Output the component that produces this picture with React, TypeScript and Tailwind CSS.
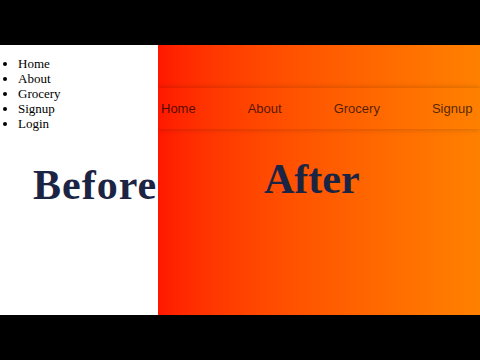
import React from 'react';

const links = ['Home', 'About', 'Grocery', 'Signup', 'Login'];
// the fifth link sits past the right edge in the shot, so the bar shows four
const navLinks = links.slice(0, 4);

const App: React.FC = () => {
  return (
    <div className="w-[480px] h-[360px] bg-black flex flex-col overflow-hidden">
      {/* top letterbox */}
      <div className="h-[45px] shrink-0" />

      <div className="h-[270px] shrink-0 flex">
        {/* BEFORE — plain list */}
        <div className="w-[158px] shrink-0 bg-white flex flex-col">
          <ul
            className="list-disc pl-[18px] pt-[11px] text-[13px] leading-[15px] text-black"
            style={{ fontFamily: '"Liberation Serif", "Times New Roman", serif' }}
          >
            {links.map((l) => (
              <li key={l}>{l}</li>
            ))}
          </ul>
          <h2
            className="mt-[30px] pl-[33px] text-[42px] leading-[48px] font-bold tracking-[1px] text-[#1c2444] whitespace-nowrap"
            style={{ fontFamily: '"Liberation Serif", "Times New Roman", serif' }}
          >
            Before
          </h2>
        </div>

        {/* AFTER — styled nav */}
        <div className="flex-1 bg-gradient-to-r from-[#ff1700] to-[#ff8000] flex flex-col overflow-hidden">
          <nav className="mt-[43px] h-[41px] shrink-0 flex items-center shadow-[0_0_6px_rgba(0,0,0,0.22)]">
            <ul
              className="flex items-center gap-[52px] pl-[3px] text-[13px] text-black/70 whitespace-nowrap"
              style={{ fontFamily: '"Liberation Sans", Arial, sans-serif' }}
            >
              {navLinks.map((l) => (
                <li key={l}>{l}</li>
              ))}
            </ul>
          </nav>
          <h2
            className="mt-[26px] pl-[106px] text-[42px] leading-[48px] font-bold text-[#1c2444] whitespace-nowrap"
            style={{ fontFamily: '"Liberation Serif", "Times New Roman", serif' }}
          >
            After
          </h2>
        </div>
      </div>

      {/* bottom letterbox */}
      <div className="flex-1" />
    </div>
  );
};

export default App;
